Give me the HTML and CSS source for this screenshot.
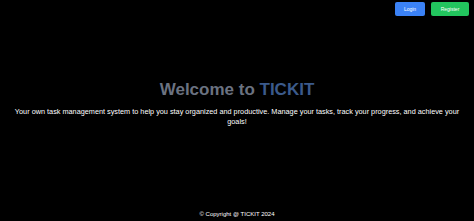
FILE: index.html
```html
<!DOCTYPE html>
<html lang="en">
<head>
    <meta charset="UTF-8">
    <meta name="viewport" content="width=device-width, initial-scale=1.0">
    <title>TICKIT</title>
    <link rel="stylesheet" href="styles.css">
</head>
<body>
    <header class="topbar">
        <button class="btn btn-login">Login</button>
        <button class="btn btn-register">Register</button>
    </header>

    <main class="hero">
        <h1>Welcome to <span class="brand">TICKIT</span></h1>
        <p>Your own task management system to help you stay organized and productive. Manage your tasks, track your progress, and achieve your goals!</p>
    </main>

    <footer class="footer">
        &copy; Copyright @ TICKIT 2024
    </footer>
</body>
</html>
```

FILE: styles.css
```css
html, body {
    height: 100%;
}
body {
    margin: 0;
    background-color: #000;
    color: #fff;
    font-family: "Liberation Sans", Arial, sans-serif;
    display: flex;
    flex-direction: column;
}
.topbar {
    display: flex;
    justify-content: flex-end;
    gap: 6px;
    padding: 2px 5px 0 0;
}
.btn {
    border: none;
    border-radius: 2px;
    color: #fff;
    font-family: inherit;
    font-size: 5px;
    height: 14px;
    cursor: pointer;
}
.btn-login {
    width: 30px;
    background-color: #3b82f6;
}
.btn-register {
    width: 38px;
    background-color: #22c55e;
}
.hero {
    flex: 1;
    display: flex;
    flex-direction: column;
    align-items: center;
    justify-content: center;
    text-align: center;
    padding: 0 8px 20px;
}
.hero h1 {
    margin: 0 0 7px;
    font-size: 17px;
    font-weight: bold;
    color: #6b7280;
}
.hero .brand {
    color: #3b5a8c;
}
.hero p {
    margin: 0;
    font-size: 7.3px;
    line-height: 10px;
}
.footer {
    text-align: center;
    font-size: 6px;
    padding-bottom: 4px;
}
```
